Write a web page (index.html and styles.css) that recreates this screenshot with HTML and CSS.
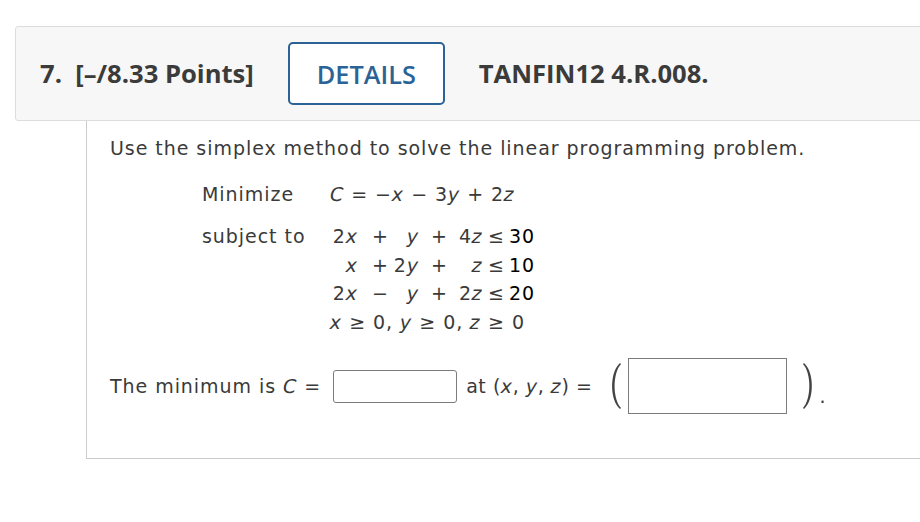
FILE: index.html
```html
<!DOCTYPE html>
<html>
<head>
<meta charset="utf-8">
<link rel="stylesheet" href="styles.css">
</head>
<body>
<div class="question">
  <div class="qhead">
    <span class="qnum">7.&nbsp; [–/8.33 Points]</span>
    <span class="details">DETAILS</span>
    <span class="qcode">TANFIN12 4.R.008.</span>
  </div>
  <div class="panel">
    <p class="intro">Use the simplex method to solve the linear programming problem.</p>
    <div class="problem">
      <div class="label">Minimize</div>
      <div class="objective"><i>C</i> = −<i>x</i> − 3<i>y</i> + 2<i>z</i></div>
      <div class="label sub">subject to</div>
      <div class="constraints">
        <span class="t">2<i>x</i></span><span class="op1">+</span><span class="t"><i>y</i></span><span class="op2">+</span><span class="t">4<i>z</i></span><span class="rhs">≤ <b>30</b></span>
        <span class="t"><i>x</i></span><span class="op1">+</span><span class="t">2<i>y</i></span><span class="op2">+</span><span class="t"><i>z</i></span><span class="rhs">≤ <b>10</b></span>
        <span class="t">2<i>x</i></span><span class="op1">−</span><span class="t"><i>y</i></span><span class="op2">+</span><span class="t">2<i>z</i></span><span class="rhs">≤ <b>20</b></span>
        <span class="full"><i>x</i> ≥ 0, <i>y</i> ≥ 0, <i>z</i> ≥ 0</span>
      </div>
    </div>
    <div class="answer">
      <span class="lbl1">The minimum is <i>C</i> =</span>
      <span class="box small"></span>
      <span class="lbl2">at (<i>x</i>, <i>y</i>, <i>z</i>) =</span>
      <svg class="paren" width="16" height="48" viewBox="0 0 16 48"><path d="M14 1 C3.5 10 3.5 38 14 47 L15 46 C6.5 37 6.5 11 15 2 Z" fill="#444"/></svg>
      <span class="box big"></span>
      <svg class="paren right" width="16" height="48" viewBox="0 0 16 48"><path d="M2 1 C12.5 10 12.5 38 2 47 L1 46 C9.5 37 9.5 11 1 2 Z" fill="#444"/></svg>
      <span class="dot">.</span>
    </div>
  </div>
</div>
</body>
</html>
```
FILE: styles.css
```css
html, body {
  margin: 0;
  padding: 0;
  background: #fff;
  overflow: hidden;
}
.question {
  padding-top: 26px;
  padding-left: 15px;
  width: 940px;
}
.qhead {
  display: flex;
  align-items: center;
  box-sizing: border-box;
  height: 95px;
  background: #f7f7f7;
  border: 1px solid #dddddd;
  border-radius: 3px;
  padding-left: 24px;
  font-family: "Open Sans", sans-serif;
  font-weight: 700;
  font-size: 25.6px;
  color: #3b3b3b;
}
.details {
  box-sizing: border-box;
  width: 157px;
  height: 63px;
  margin: 0 34px;
  display: flex;
  align-items: center;
  justify-content: center;
  border: 2px solid #2b6397;
  border-radius: 5px;
  background: #fff;
  color: #2b6397;
  font-weight: 600;
  font-size: 25.3px;
}
.panel {
  margin-left: 71px;
  border-left: 1px solid #cccccc;
  border-bottom: 1px solid #cccccc;
  padding: 15px 0 44px 23px;
  font-family: "DejaVu Sans", Verdana, sans-serif;
  font-size: 19px;
  letter-spacing: 0.95px;
  color: #3a3a3a;
}
.panel i {
  display: inline-block;
  font-style: normal;
  transform: skewX(-12deg);
}
.intro {
  margin: 0;
  line-height: 24px;
}
.problem {
  margin-left: 92px;
  margin-top: 20px;
  display: grid;
  grid-template-columns: 128px auto;
  align-items: start;
}
.label, .objective {
  line-height: 28px;
}
.sub {
  margin-top: 14px;
}
.constraints {
  margin-top: 14px;
  display: grid;
  grid-template-columns: 28px 35px 26px 38px 26px auto;
  justify-content: start;
  line-height: 28.6px;
  white-space: nowrap;
}
.t {
  justify-self: end;
}
.op1 {
  padding-left: 14px;
}
.op2 {
  padding-left: 12px;
}
.rhs {
  padding-left: 5px;
  word-spacing: -3px;
}
.rhs b {
  font-weight: normal;
  color: #000;
}
.full {
  grid-column: 1 / -1;
}
.answer {
  margin-top: 22px;
  display: flex;
  align-items: center;
  height: 56px;
  white-space: nowrap;
}
.box {
  display: inline-block;
  box-sizing: border-box;
  border: 1px solid #7c7c7c;
  background: #fff;
}
.small {
  width: 124px;
  height: 33px;
  border-radius: 3px;
  margin: 0 9px 0 12px;
}
.lbl2 {
  letter-spacing: 0.55px;
}
.big {
  width: 159px;
  height: 56px;
}
.paren {
  margin: 0 6px 0 14px;
}
.paren.right {
  margin: 0 1px 0 15px;
}
.dot {
  align-self: flex-end;
  line-height: 19px;
  margin-bottom: 8px;
}
```
